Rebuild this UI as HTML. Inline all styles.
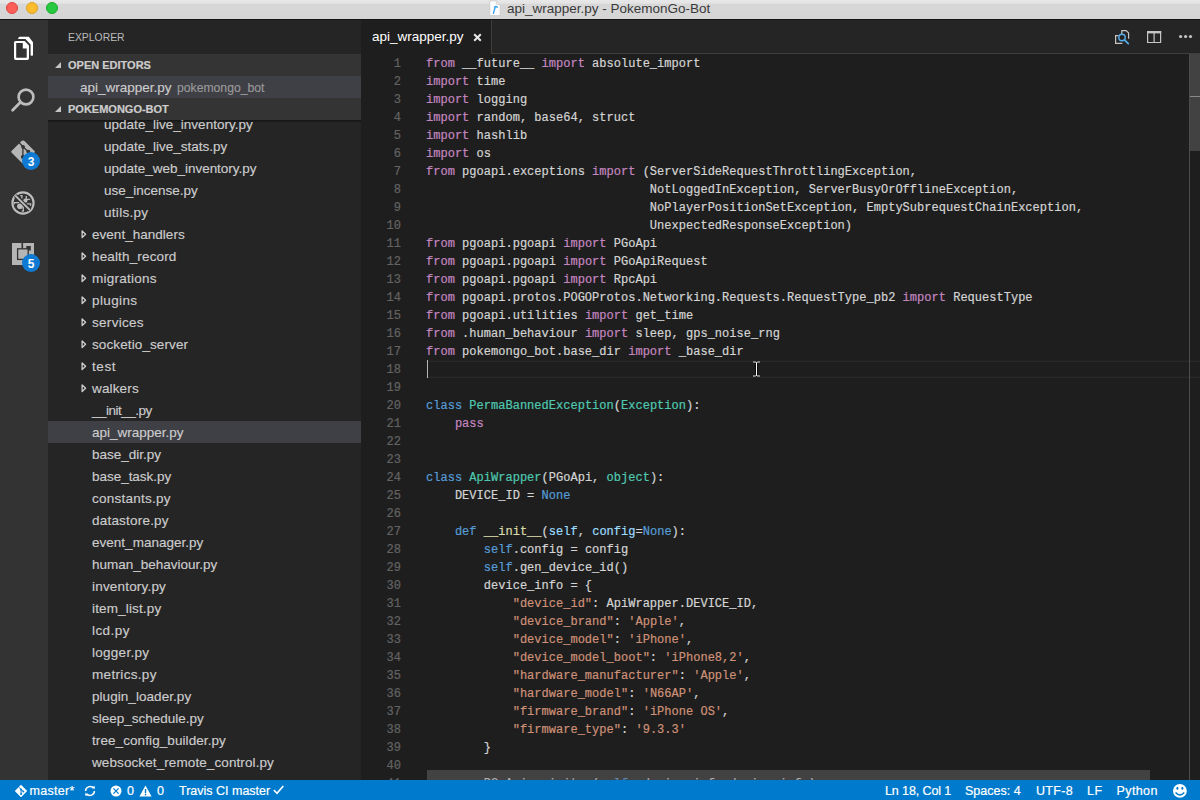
<!DOCTYPE html>
<html><head><meta charset="utf-8">
<style>
*{margin:0;padding:0;box-sizing:border-box}
html,body{width:1200px;height:800px;overflow:hidden;background:#1e1e1e;font-family:"Liberation Sans",sans-serif}
.abs{position:absolute}
#title{left:0;top:0;width:1200px;height:20px;background:linear-gradient(#e8e8e8 0,#e4e4e4 3px,#d7d7d7 4.5px,#d5d5d5 19px);border-bottom:1px solid #131313}
.tl{position:absolute;top:2px;width:12px;height:12px;border-radius:50%}
#ttext{left:507px;top:1px;font-size:13.5px;color:#3a3a3a;white-space:pre;line-height:16px}
#act{left:0;top:20px;width:48px;height:760px;background:#333333}
#side{left:48px;top:20px;width:313px;height:760px;background:#252526;overflow:hidden}
.sh{position:absolute;left:0;width:313px;height:22px;background:#343434;color:#cccccc;font-weight:bold;font-size:11px;line-height:23px;-webkit-text-stroke:0.2px}
.sh span{position:absolute;left:20px}
.tri{position:absolute;left:7px;top:7.5px;width:0;height:0;border-left:6px solid transparent;border-bottom:6px solid #c5c5c5}
.row{position:absolute;left:0;width:313px;height:22px;line-height:24px;font-size:13.5px;letter-spacing:0.15px;color:#cccccc;white-space:pre;-webkit-text-stroke:0.15px}
.row .a{position:absolute;top:7px;width:0;height:0}
#tabs{left:361px;top:20px;width:839px;height:34px;background:#252526}
#editor{left:361px;top:54px;width:839px;height:726px;background:#1e1e1e;overflow:hidden}
.ln{position:absolute;left:0;width:40px;text-align:right;color:#636363}
.code{position:absolute;left:65px;color:#d4d4d4;white-space:pre}
.cl{position:absolute;left:0;height:18px;width:839px;-webkit-text-stroke:0.2px;font-family:"Liberation Mono",monospace;font-size:12px;line-height:18px;letter-spacing:0.02px}
.k{color:#c586c0}.b{color:#569cd6}.t{color:#4ec9b0}.f{color:#dcdcaa}.p{color:#9cdcfe}.s{color:#ce9178}
#status{left:0;top:780px;width:1200px;height:20px;background:#007acc;color:#fff;font-size:12.5px;line-height:20px;white-space:pre;-webkit-text-stroke:0.2px}
#status span{position:absolute;top:1px}
</style></head><body>

<div id="title" class="abs">
  <div class="tl" style="left:6px;background:#fc5f57;border:0.5px solid #e0443e"></div>
  <div class="tl" style="left:26px;background:#fdbc2e;border:0.5px solid #dea123"></div>
  <div class="tl" style="left:46px;background:#28c840;border:0.5px solid #1aab29"></div>
  <svg class="abs" style="left:489px;top:0px" width="13" height="17" viewBox="0 0 13 17">
    <path d="M0.8 0.9 H7.6 L11.2 4.5 V15.6 H0.8 Z" fill="#fdfdfd" stroke="#c4c4c4" stroke-width="0.7"/>
    <path d="M7.6 0.9 V4.5 H11.2" fill="#e8e8e8" stroke="#c4c4c4" stroke-width="0.5"/>
    <path d="M8.3 7.2 Q7 6 5.6 7.1 M6.3 6.8 L4.4 13.4" fill="none" stroke="#36a3f2" stroke-width="1.4" stroke-linecap="round"/>
  </svg>
  <div id="ttext" class="abs">api_wrapper.py - PokemonGo-Bot</div>
</div>

<div id="act" class="abs">
  <svg class="abs" style="left:0;top:-20px" width="48" height="300" viewBox="0 0 48 300">
    <!-- explorer -->
    <path d="M18 39 L18.6 37.6 Q19 36.8 19.8 36.8 L28.8 36.8 L33 42.2 L33 55 Q33 55.7 32.3 55.7 L31.3 55.7 Q30.6 55.7 30.6 55 L30.6 44.6 L25.4 39 Z" fill="#ffffff"/>
    <path fill-rule="evenodd" fill="#ffffff" d="M14 42.6 Q14 40.9 15.7 40.9 L24.6 40.9 L29 45.6 L29 58.3 Q29 60 27.3 60 L15.7 60 Q14 60 14 58.3 Z M16.2 43 L22.8 43 L22.8 48.4 L26.7 48.4 L26.7 57.8 L16.2 57.8 Z"/>
    <!-- search -->
    <circle cx="26" cy="97" r="7.4" fill="none" stroke="#bdbdbd" stroke-width="2.6"/>
    <path d="M20.2 102.6 L12.6 110.2" stroke="#bdbdbd" stroke-width="2.8" stroke-linecap="round"/>
    <!-- git -->
    <path d="M23 140.5 Q23.8 140.3 24.5 141 L34.5 151 Q35.3 151.8 34.5 152.6 L24.5 162.6 Q23 164 21.5 162.6 L11.5 152.6 Q10.7 151.8 11.5 151 L21.5 141 Q22.2 140.3 23 140.5 Z" fill="#b5b5b5"/>
    <path d="M19 142.5 L23 146.8 L22.8 157.5 M23 146.8 L28.3 151.8" stroke="#333333" stroke-width="1.3" fill="none"/>
    <circle cx="23" cy="146.8" r="1.9" fill="#333333"/>
    <circle cx="22.8" cy="157" r="1.9" fill="#333333"/>
    <circle cx="28.3" cy="151.6" r="1.9" fill="#333333"/>
    <circle cx="31" cy="161" r="9" fill="#0e7ad3"/>
    <text x="31" y="165.8" text-anchor="middle" font-family="Liberation Sans" font-size="12" font-weight="bold" fill="#ffffff">3</text>
    <!-- debug -->
    <circle cx="23" cy="203" r="10.6" fill="none" stroke="#bdbdbd" stroke-width="2.1"/>
    <g fill="#bdbdbd">
      <ellipse cx="20" cy="206.2" rx="2.9" ry="2.8"/>
      <ellipse cx="25.4" cy="200.6" rx="2.1" ry="2.2"/>
    </g>
    <g stroke="#bdbdbd" stroke-width="1.3" fill="none">
      <path d="M14.3 204.3 V202.6 H19.4"/>
      <path d="M30.6 205.8 V203.8 H26.8"/>
      <path d="M20.2 195.6 H21.9 V198.6"/>
      <path d="M26.3 196 V199.4 H29.9"/>
      <path d="M21.8 211.2 H23.3 V206.6"/>
    </g>
    <path d="M15.3 195.6 L30 210.2" stroke="#333333" stroke-width="3.8"/>
    <path d="M15.3 195.6 L30 210.2" stroke="#bdbdbd" stroke-width="1.9"/>
    <!-- extensions -->
    <rect x="12" y="243" width="22" height="22" fill="#b5b5b5"/>
    <rect x="21.5" y="242.5" width="1.6" height="6" fill="#333333"/>
    <rect x="26.3" y="246" width="4.5" height="4.5" fill="#333333"/>
    <rect x="17.6" y="248.8" width="10.6" height="10.6" fill="#b5b5b5" stroke="#333333" stroke-width="1.3"/>
    <circle cx="31" cy="263" r="9" fill="#0e7ad3"/>
    <text x="31" y="267.8" text-anchor="middle" font-family="Liberation Sans" font-size="12" font-weight="bold" fill="#ffffff">5</text>
  </svg>
</div>

<div id="side" class="abs">
  <div class="abs" style="left:20px;top:1px;height:34px;line-height:34px;font-size:10.4px;color:#bbbbbb">EXPLORER</div>
  <div class="sh" style="top:34px"><div class="tri"></div><span>OPEN EDITORS</span></div>
  <div class="row" style="top:56px;background:#3f3f46"><span style="position:absolute;left:32px;letter-spacing:0">api_wrapper.py</span><span style="position:absolute;left:129px;font-size:12.2px;letter-spacing:0;color:#9a9a9a">pokemongo_bot</span></div>
  <div class="abs" style="left:0;top:100px;width:313px;height:3px;background:linear-gradient(rgba(0,0,0,0.45),rgba(0,0,0,0))"></div>
  <div class="sh" style="top:78px"><div class="tri"></div><span>POKEMONGO-BOT</span></div>
  <div id="tree" class="abs" style="left:0;top:100px;width:313px;height:660px;overflow:hidden">
<div class="row" style="top:-7px;"><span style="position:absolute;left:56px;letter-spacing:0.020px">update_live_inventory.py</span></div>
<div class="row" style="top:15px;"><span style="position:absolute;left:56px;letter-spacing:0.014px">update_live_stats.py</span></div>
<div class="row" style="top:37px;"><span style="position:absolute;left:56px;letter-spacing:-0.014px">update_web_inventory.py</span></div>
<div class="row" style="top:59px;"><span style="position:absolute;left:56px;letter-spacing:-0.004px">use_incense.py</span></div>
<div class="row" style="top:81px;"><span style="position:absolute;left:56px;letter-spacing:0.293px">utils.py</span></div>
<div class="row" style="top:103px;"><svg class="abs" style="left:33px;top:6.5px" width="6" height="9" viewBox="0 0 6 9"><path d="M1.1 0.9 L4.6 4.2 L1.1 7.5 Z" fill="none" stroke="#d0d0d0" stroke-width="1.3" stroke-linejoin="round"/></svg><span style="position:absolute;left:44px;letter-spacing:0.027px">event_handlers</span></div>
<div class="row" style="top:125px;"><svg class="abs" style="left:33px;top:6.5px" width="6" height="9" viewBox="0 0 6 9"><path d="M1.1 0.9 L4.6 4.2 L1.1 7.5 Z" fill="none" stroke="#d0d0d0" stroke-width="1.3" stroke-linejoin="round"/></svg><span style="position:absolute;left:44px;letter-spacing:0.150px">health_record</span></div>
<div class="row" style="top:147px;"><svg class="abs" style="left:33px;top:6.5px" width="6" height="9" viewBox="0 0 6 9"><path d="M1.1 0.9 L4.6 4.2 L1.1 7.5 Z" fill="none" stroke="#d0d0d0" stroke-width="1.3" stroke-linejoin="round"/></svg><span style="position:absolute;left:44px;letter-spacing:0.261px">migrations</span></div>
<div class="row" style="top:169px;"><svg class="abs" style="left:33px;top:6.5px" width="6" height="9" viewBox="0 0 6 9"><path d="M1.1 0.9 L4.6 4.2 L1.1 7.5 Z" fill="none" stroke="#d0d0d0" stroke-width="1.3" stroke-linejoin="round"/></svg><span style="position:absolute;left:44px;letter-spacing:0.383px">plugins</span></div>
<div class="row" style="top:191px;"><svg class="abs" style="left:33px;top:6.5px" width="6" height="9" viewBox="0 0 6 9"><path d="M1.1 0.9 L4.6 4.2 L1.1 7.5 Z" fill="none" stroke="#d0d0d0" stroke-width="1.3" stroke-linejoin="round"/></svg><span style="position:absolute;left:44px;letter-spacing:0.293px">services</span></div>
<div class="row" style="top:213px;"><svg class="abs" style="left:33px;top:6.5px" width="6" height="9" viewBox="0 0 6 9"><path d="M1.1 0.9 L4.6 4.2 L1.1 7.5 Z" fill="none" stroke="#d0d0d0" stroke-width="1.3" stroke-linejoin="round"/></svg><span style="position:absolute;left:44px;letter-spacing:0.107px">socketio_server</span></div>
<div class="row" style="top:235px;"><svg class="abs" style="left:33px;top:6.5px" width="6" height="9" viewBox="0 0 6 9"><path d="M1.1 0.9 L4.6 4.2 L1.1 7.5 Z" fill="none" stroke="#d0d0d0" stroke-width="1.3" stroke-linejoin="round"/></svg><span style="position:absolute;left:44px;letter-spacing:0.617px">test</span></div>
<div class="row" style="top:257px;"><svg class="abs" style="left:33px;top:6.5px" width="6" height="9" viewBox="0 0 6 9"><path d="M1.1 0.9 L4.6 4.2 L1.1 7.5 Z" fill="none" stroke="#d0d0d0" stroke-width="1.3" stroke-linejoin="round"/></svg><span style="position:absolute;left:44px;letter-spacing:0.150px">walkers</span></div>
<div class="row" style="top:279px;"><span style="position:absolute;left:44px;letter-spacing:-0.510px">__init__.py</span></div>
<div class="row" style="top:301px; background:#3f3f46;"><span style="position:absolute;left:44px;letter-spacing:-0.004px">api_wrapper.py</span></div>
<div class="row" style="top:323px;"><span style="position:absolute;left:44px;letter-spacing:-0.010px">base_dir.py</span></div>
<div class="row" style="top:345px;"><span style="position:absolute;left:44px;letter-spacing:-0.031px">base_task.py</span></div>
<div class="row" style="top:367px;"><span style="position:absolute;left:44px;letter-spacing:0.241px">constants.py</span></div>
<div class="row" style="top:389px;"><span style="position:absolute;left:44px;letter-spacing:0.205px">datastore.py</span></div>
<div class="row" style="top:411px;"><span style="position:absolute;left:44px;letter-spacing:0.017px">event_manager.py</span></div>
<div class="row" style="top:433px;"><span style="position:absolute;left:44px;letter-spacing:-0.003px">human_behaviour.py</span></div>
<div class="row" style="top:455px;"><span style="position:absolute;left:44px;letter-spacing:0.186px">inventory.py</span></div>
<div class="row" style="top:477px;"><span style="position:absolute;left:44px;letter-spacing:0.150px">item_list.py</span></div>
<div class="row" style="top:499px;"><span style="position:absolute;left:44px;letter-spacing:0.430px">lcd.py</span></div>
<div class="row" style="top:521px;"><span style="position:absolute;left:44px;letter-spacing:0.275px">logger.py</span></div>
<div class="row" style="top:543px;"><span style="position:absolute;left:44px;letter-spacing:0.327px">metrics.py</span></div>
<div class="row" style="top:565px;"><span style="position:absolute;left:44px;letter-spacing:0.057px">plugin_loader.py</span></div>
<div class="row" style="top:587px;"><span style="position:absolute;left:44px;letter-spacing:0.000px">sleep_schedule.py</span></div>
<div class="row" style="top:609px;"><span style="position:absolute;left:44px;letter-spacing:0.084px">tree_config_builder.py</span></div>
<div class="row" style="top:631px;"><span style="position:absolute;left:44px;letter-spacing:0.096px">websocket_remote_control.py</span></div>
<div class="row" style="top:653px;"><span style="position:absolute;left:44px;letter-spacing:0.150px">worker_result.py</span></div>
  </div>
</div>

<div id="tabs" class="abs">
  <div class="abs" style="left:0;top:0;width:130px;height:34px;background:#1e1e1e"></div>
  <div class="abs" style="left:11px;top:0;line-height:34px;font-size:13.5px;color:#ffffff">api_wrapper.py</div>
  <svg class="abs" style="left:112px;top:13px" width="9" height="9" viewBox="0 0 9 9"><path d="M1.2 1.2L7.8 7.8M7.8 1.2L1.2 7.8" stroke="#e8e8e8" stroke-width="2"/></svg>
  <div class="abs" style="left:130px;top:0;width:1px;height:34px;background:#433d39"></div>
  <div class="abs" style="left:130px;top:33px;width:709px;height:1px;background:#433d39"></div>
<svg class="abs" style="left:744px;top:2px" width="95" height="30" viewBox="1105 22 95 30">
    <path d="M1121.8 34.6 V30.6 H1126.2 L1128.6 33 V38.8" fill="none" stroke="#c5c5c5" stroke-width="1.2"/>
    <path d="M1118.4 35.6 H1115.6 V43.3 H1122.4" fill="none" stroke="#c5c5c5" stroke-width="1.2"/>
    <circle cx="1122" cy="37.5" r="3.2" fill="none" stroke="#55aee9" stroke-width="1.4"/>
    <path d="M1124.4 39.9 L1128.3 43.7" stroke="#55aee9" stroke-width="1.7" stroke-linecap="round"/>
    <path d="M1147.6 31.6 H1160.6 V42.5 H1147.6 Z M1154.1 32 V42.5" fill="none" stroke="#c5c5c5" stroke-width="1.2"/>
    <rect x="1147" y="31" width="14.2" height="2.4" fill="#c5c5c5"/>
    <circle cx="1180.6" cy="36.5" r="1.6" fill="#c5c5c5"/><circle cx="1185.6" cy="36.5" r="1.6" fill="#c5c5c5"/><circle cx="1190.5" cy="36.5" r="1.6" fill="#c5c5c5"/>
  </svg>
</div>

<div id="editor" class="abs">
<div class="cl" style="top:1px"><span class="ln">1</span><span class="code"><span class="k">from</span> __future__ <span class="k">import</span> absolute_import</span></div>
<div class="cl" style="top:19px"><span class="ln">2</span><span class="code"><span class="k">import</span> time</span></div>
<div class="cl" style="top:37px"><span class="ln">3</span><span class="code"><span class="k">import</span> logging</span></div>
<div class="cl" style="top:55px"><span class="ln">4</span><span class="code"><span class="k">import</span> random, base64, struct</span></div>
<div class="cl" style="top:73px"><span class="ln">5</span><span class="code"><span class="k">import</span> hashlib</span></div>
<div class="cl" style="top:91px"><span class="ln">6</span><span class="code"><span class="k">import</span> os</span></div>
<div class="cl" style="top:109px"><span class="ln">7</span><span class="code"><span class="k">from</span> pgoapi.exceptions <span class="k">import</span> (ServerSideRequestThrottlingException,</span></div>
<div class="cl" style="top:127px"><span class="ln">8</span><span class="code">                               NotLoggedInException, ServerBusyOrOfflineException,</span></div>
<div class="cl" style="top:145px"><span class="ln">9</span><span class="code">                               NoPlayerPositionSetException, EmptySubrequestChainException,</span></div>
<div class="cl" style="top:163px"><span class="ln">10</span><span class="code">                               UnexpectedResponseException)</span></div>
<div class="cl" style="top:181px"><span class="ln">11</span><span class="code"><span class="k">from</span> pgoapi.pgoapi <span class="k">import</span> PGoApi</span></div>
<div class="cl" style="top:199px"><span class="ln">12</span><span class="code"><span class="k">from</span> pgoapi.pgoapi <span class="k">import</span> PGoApiRequest</span></div>
<div class="cl" style="top:217px"><span class="ln">13</span><span class="code"><span class="k">from</span> pgoapi.pgoapi <span class="k">import</span> RpcApi</span></div>
<div class="cl" style="top:235px"><span class="ln">14</span><span class="code"><span class="k">from</span> pgoapi.protos.POGOProtos.Networking.Requests.RequestType_pb2 <span class="k">import</span> RequestType</span></div>
<div class="cl" style="top:253px"><span class="ln">15</span><span class="code"><span class="k">from</span> pgoapi.utilities <span class="k">import</span> get_time</span></div>
<div class="cl" style="top:271px"><span class="ln">16</span><span class="code"><span class="k">from</span> .human_behaviour <span class="k">import</span> sleep, gps_noise_rng</span></div>
<div class="cl" style="top:289px"><span class="ln">17</span><span class="code"><span class="k">from</span> pokemongo_bot.base_dir <span class="k">import</span> _base_dir</span></div>
<div class="cl" style="top:307px"><span class="ln">18</span><span class="code"></span></div>
<div class="cl" style="top:325px"><span class="ln">19</span><span class="code"></span></div>
<div class="cl" style="top:343px"><span class="ln">20</span><span class="code"><span class="b">class</span> <span class="t">PermaBannedException</span>(<span class="t">Exception</span>):</span></div>
<div class="cl" style="top:361px"><span class="ln">21</span><span class="code">    <span class="k">pass</span></span></div>
<div class="cl" style="top:379px"><span class="ln">22</span><span class="code"></span></div>
<div class="cl" style="top:397px"><span class="ln">23</span><span class="code"></span></div>
<div class="cl" style="top:415px"><span class="ln">24</span><span class="code"><span class="b">class</span> <span class="t">ApiWrapper</span>(PGoApi, <span class="t">object</span>):</span></div>
<div class="cl" style="top:433px"><span class="ln">25</span><span class="code">    DEVICE_ID = <span class="b">None</span></span></div>
<div class="cl" style="top:451px"><span class="ln">26</span><span class="code"></span></div>
<div class="cl" style="top:469px"><span class="ln">27</span><span class="code">    <span class="b">def</span> <span class="f">__init__</span>(<span class="p">self</span>, <span class="p">config</span>=<span class="b">None</span>):</span></div>
<div class="cl" style="top:487px"><span class="ln">28</span><span class="code">        <span class="b">self</span>.config = config</span></div>
<div class="cl" style="top:505px"><span class="ln">29</span><span class="code">        <span class="b">self</span>.gen_device_id()</span></div>
<div class="cl" style="top:523px"><span class="ln">30</span><span class="code">        device_info = {</span></div>
<div class="cl" style="top:541px"><span class="ln">31</span><span class="code">            <span class="s">&quot;device_id&quot;</span>: ApiWrapper.DEVICE_ID,</span></div>
<div class="cl" style="top:559px"><span class="ln">32</span><span class="code">            <span class="s">&quot;device_brand&quot;</span>: <span class="s">&#x27;Apple&#x27;</span>,</span></div>
<div class="cl" style="top:577px"><span class="ln">33</span><span class="code">            <span class="s">&quot;device_model&quot;</span>: <span class="s">&#x27;iPhone&#x27;</span>,</span></div>
<div class="cl" style="top:595px"><span class="ln">34</span><span class="code">            <span class="s">&quot;device_model_boot&quot;</span>: <span class="s">&#x27;iPhone8,2&#x27;</span>,</span></div>
<div class="cl" style="top:613px"><span class="ln">35</span><span class="code">            <span class="s">&quot;hardware_manufacturer&quot;</span>: <span class="s">&#x27;Apple&#x27;</span>,</span></div>
<div class="cl" style="top:631px"><span class="ln">36</span><span class="code">            <span class="s">&quot;hardware_model&quot;</span>: <span class="s">&#x27;N66AP&#x27;</span>,</span></div>
<div class="cl" style="top:649px"><span class="ln">37</span><span class="code">            <span class="s">&quot;firmware_brand&quot;</span>: <span class="s">&#x27;iPhone OS&#x27;</span>,</span></div>
<div class="cl" style="top:667px"><span class="ln">38</span><span class="code">            <span class="s">&quot;firmware_type&quot;</span>: <span class="s">&#x27;9.3.3&#x27;</span></span></div>
<div class="cl" style="top:685px"><span class="ln">39</span><span class="code">        }</span></div>
<div class="cl" style="top:703px"><span class="ln">40</span><span class="code"></span></div>
<div class="cl" style="top:721px"><span class="ln">41</span><span class="code">        PGoApi.__init__(<span class="b">self</span>, device_info=device_info)</span></div>
<div class="abs" style="left:65px;top:306px;width:774px;height:1px;background:#222222"></div><div class="abs" style="left:65px;top:307px;width:774px;height:1px;background:#282828"></div><div class="abs" style="left:65px;top:322px;width:774px;height:1px;background:#222222"></div><div class="abs" style="left:65px;top:323px;width:774px;height:1px;background:#282828"></div>
<div class="abs" style="left:66px;top:306px;width:1px;height:18px;background:#b4b4b4"></div>
<div class="abs" style="left:66px;top:716px;width:723px;height:10px;background:rgba(121,121,121,0.4)"></div>
<div class="abs" style="left:828px;top:0;width:1px;height:726px;background:#4d4d4d"></div>
<div class="abs" style="left:829px;top:0;width:10px;height:97px;background:rgba(121,121,121,0.4)"></div>
<div class="abs" style="left:829px;top:42px;width:10px;height:1px;background:#8a8a8a"></div>
<svg class="abs" style="left:391px;top:307px" width="9" height="16" viewBox="0 0 9 16"><path d="M1 1 H3.5 Q4.5 1 4.5 2 V14 Q4.5 15 3.5 15 H1 M8 1 H5.5 Q4.5 1 4.5 2 M4.5 14 Q4.5 15 5.5 15 H8" fill="none" stroke="#000" stroke-width="2.2"/><path d="M1 1 H3.5 Q4.5 1 4.5 2 V14 Q4.5 15 3.5 15 H1 M8 1 H5.5 Q4.5 1 4.5 2 M4.5 14 Q4.5 15 5.5 15 H8" fill="none" stroke="#fff" stroke-width="1"/></svg>
</div>

<div id="status" class="abs">
  <svg class="abs" style="left:13.6px;top:4.3px" width="14" height="14" viewBox="0 0 14 14">
    <path d="M7 1.1 L12.9 7 L7 12.9 L1.1 7 Z" fill="#fff" stroke="#fff" stroke-width="0.6" stroke-linejoin="round"/>
    <path d="M5 3.3 L7.1 5.4 V10.4 M7.1 5.4 L9.3 7.6" stroke="#007acc" stroke-width="1" fill="none"/>
    <circle cx="7.1" cy="5.4" r="1" fill="#007acc"/><circle cx="7.1" cy="10" r="1" fill="#007acc"/><circle cx="9.3" cy="7.6" r="1" fill="#007acc"/>
  </svg>
  <span style="left:29.5px;letter-spacing:0.3px">master*</span>
  <svg class="abs" style="left:84.3px;top:4.8px" width="12" height="12" viewBox="0 0 12 12">
    <path d="M1.6 6 A4.4 4.4 0 0 1 9.4 3.2" fill="none" stroke="#fff" stroke-width="1.5"/>
    <path d="M10.4 6 A4.4 4.4 0 0 1 2.6 8.8" fill="none" stroke="#fff" stroke-width="1.5"/>
    <path d="M8 1.2 L11 1.6 L10.4 4.6 Z" fill="#fff"/>
    <path d="M4 10.8 L1 10.4 L1.6 7.4 Z" fill="#fff"/>
  </svg>
  <svg class="abs" style="left:110.4px;top:5.4px" width="12" height="12" viewBox="0 0 12 12">
    <circle cx="6" cy="6" r="5.5" fill="#fff"/>
    <path d="M3.4 3.4 L8.6 8.6 M8.6 3.4 L3.4 8.6" stroke="#007acc" stroke-width="1.25"/>
  </svg>
  <span style="left:127px">0</span>
  <svg class="abs" style="left:139px;top:5px" width="13" height="12" viewBox="0 0 13 12">
    <path d="M6.5 0.5 L12.6 11.5 H0.4 Z" fill="#fff"/>
    <rect x="5.8" y="4" width="1.4" height="4.3" fill="#007acc"/><rect x="5.8" y="9" width="1.4" height="1.4" fill="#007acc"/>
  </svg>
  <span style="left:157px">0</span>
  <span style="left:179px">Travis CI master</span>
  <svg class="abs" style="left:273px;top:5px" width="11" height="10" viewBox="0 0 11 10">
    <path d="M0.8 5 L4 8.3 L10.3 1" fill="none" stroke="#fff" stroke-width="1.6"/>
  </svg>
  <span style="left:885px;letter-spacing:-0.1px">Ln 18, Col 1</span>
  <span style="left:965px">Spaces: 4</span>
  <span style="left:1036px;letter-spacing:0.3px">UTF-8</span>
  <span style="left:1087px;letter-spacing:0.5px">LF</span>
  <span style="left:1116.5px;letter-spacing:0.4px">Python</span>
  <svg class="abs" style="left:1173px;top:784px;top:4px" width="14" height="14" viewBox="0 0 14 14">
    <circle cx="6.9" cy="6.9" r="6.9" fill="#fff"/>
    <ellipse cx="4.4" cy="4.2" rx="1" ry="1.5" fill="#007acc"/><ellipse cx="9.4" cy="4.2" rx="1" ry="1.5" fill="#007acc"/>
    <path d="M2.6 8.6 Q6.9 13.6 11.2 8.6" fill="none" stroke="#007acc" stroke-width="1.5"/>
  </svg>
</div>

</body></html>
